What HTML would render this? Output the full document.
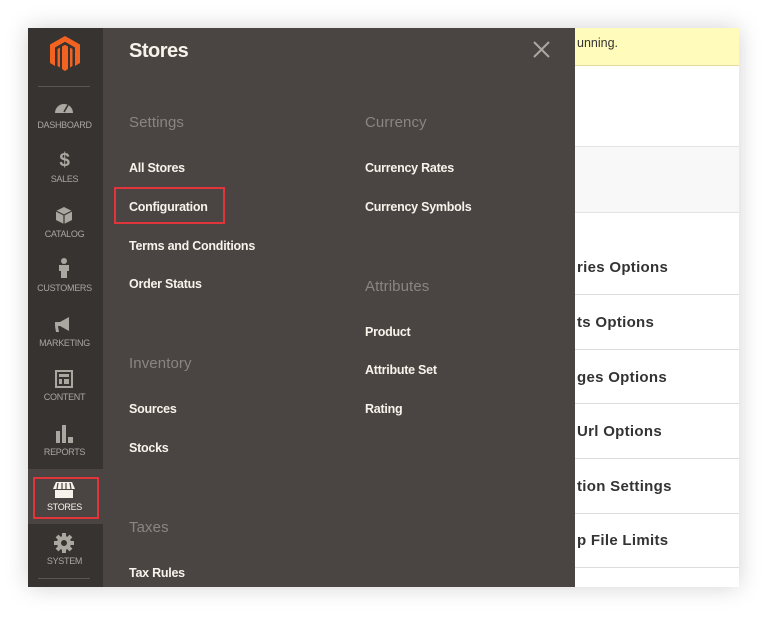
<!DOCTYPE html>
<html><head><style>
*{margin:0;padding:0;box-sizing:border-box}
body{width:768px;height:617px;background:#fff;position:relative;overflow:hidden;font-family:"Liberation Sans",sans-serif}
.a{position:absolute}
.frame{left:28px;top:28px;width:711px;height:559px;box-shadow:0 0 22px rgba(0,0,0,.18);background:#fff}
.side{left:28px;top:28px;width:75px;height:559px;background:#373330}
.fly{left:103px;top:28px;width:472px;height:559px;background:#4a4542}
.it{position:absolute;left:27px;width:75px;text-align:center;color:#aaa6a0;font-size:9px;letter-spacing:-.3px}
.lk{position:absolute;color:#f7f3eb;font-size:12.5px;font-weight:bold;letter-spacing:-.25px;margin-top:1px}
.hd{position:absolute;color:#8a8580;font-size:15px;letter-spacing:.1px}
.rt{position:absolute;left:577px;color:#333;font-size:15px;font-weight:bold;letter-spacing:.3px}
.ln{position:absolute;left:575px;width:164px;height:1px;background:#dcdcdc}
</style></head><body>
<div class="a frame"></div>
<div class="a" style="left:575px;top:28px;width:164px;height:38px;background:#fffbbb;border-bottom:1px solid #e0dca0"></div>
<div class="a" style="left:577px;top:36px;font-size:12.5px;color:#333">unning.</div>
<div class="a" style="left:575px;top:146px;width:164px;height:67px;background:#f8f8f8;border-top:1px solid #e3e3e3;border-bottom:1px solid #e3e3e3"></div>
<div class="rt" style="top:259px">ries Options</div>
<div class="ln" style="top:294px"></div>
<div class="rt" style="top:314px">ts Options</div>
<div class="ln" style="top:349px"></div>
<div class="rt" style="top:369px">ges Options</div>
<div class="ln" style="top:403px"></div>
<div class="rt" style="top:423px">Url Options</div>
<div class="ln" style="top:458px"></div>
<div class="rt" style="top:478px">tion Settings</div>
<div class="ln" style="top:513px"></div>
<div class="rt" style="top:532px">p File Limits</div>
<div class="ln" style="top:567px"></div>

<div class="a side"></div>
<svg class="a" style="left:50px;top:36px" width="30" height="36" viewBox="0 0 30 36"><path d="M15 0L30 8.5V27L25 30V11.5L15 5.8 5 11.5V30L0 27V8.5Z M12 10.5l3-1.7 3 1.7V33l-3 2-3-2Z" fill="#f26322"/><path d="M7.5 13l2.5-1.4V31.5L7.5 30Z M22.5 13L20 11.6V31.5l2.5-1.5Z" fill="#f26322"/></svg>
<div class="a" style="left:38px;top:86px;width:52px;height:1px;background:#5a5550"></div>
<svg class="a" style="left:54px;top:100px" width="20" height="14" viewBox="0 0 20 14"><path d="M1 13A9 9 0 0 1 19 13Z" fill="#aaa6a0"/><path d="M10 12L14 5" stroke="#373330" stroke-width="1.6"/></svg>
<div class="it" style="top:120px">DASHBOARD</div>
<div class="it" style="top:150px;font-size:19px;font-weight:bold;color:#aaa6a0">$</div>
<div class="it" style="top:174px">SALES</div>
<svg class="a" style="left:56px;top:207px" width="16" height="17" viewBox="0 0 16 17"><path d="M8 0L16 4V13L8 17 0 13V4Z" fill="#aaa6a0"/><path d="M0 4L8 8 16 4M8 8V17" stroke="#373330" stroke-width="1.2" fill="none"/></svg>
<div class="it" style="top:229px">CATALOG</div>
<svg class="a" style="left:58px;top:258px" width="12" height="20" viewBox="0 0 12 20"><circle cx="6" cy="3" r="3" fill="#aaa6a0"/><path d="M1 7h10v6H9v7H3v-7H1Z" fill="#aaa6a0"/></svg>
<div class="it" style="top:283px">CUSTOMERS</div>
<svg class="a" style="left:53px;top:317px" width="20" height="16" viewBox="0 0 20 16"><path d="M2 5h5L16 0V14L7 9H5L6 15H3L2 9Z" fill="#aaa6a0"/></svg>
<div class="it" style="top:338px">MARKETING</div>
<svg class="a" style="left:55px;top:370px" width="18" height="18" viewBox="0 0 18 18"><rect x="1" y="1" width="16" height="16" fill="none" stroke="#aaa6a0" stroke-width="2"/><rect x="4" y="4" width="10" height="3" fill="#aaa6a0"/><rect x="4" y="9" width="3" height="5" fill="#aaa6a0"/><rect x="9" y="9" width="5" height="5" fill="#aaa6a0"/></svg>
<div class="it" style="top:392px">CONTENT</div>
<svg class="a" style="left:55px;top:425px" width="20" height="18" viewBox="0 0 20 18"><rect x="1" y="6" width="4" height="12" fill="#aaa6a0"/><rect x="7" y="0" width="4" height="18" fill="#aaa6a0"/><rect x="13" y="12" width="5" height="6" fill="#aaa6a0"/></svg>
<div class="it" style="top:447px">REPORTS</div>
<div class="a" style="left:28px;top:469px;width:75px;height:55px;background:#4a4542"></div>
<div class="a" style="left:33px;top:477px;width:66px;height:42px;border:2px solid #e0353a"></div>
<svg class="a" style="left:53px;top:482px" width="22" height="16" viewBox="0 0 22 16"><path d="M3 0h16l3 7H0Z" fill="#f7f3eb"/><path d="M5 1L4 7M9 1V7M13 1V7M17 1l1 6" stroke="#4a4542" stroke-width="1.2"/><rect x="2" y="8" width="18" height="8" fill="#f7f3eb"/></svg>
<div class="it" style="top:502px;color:#f7f3eb">STORES</div>
<svg class="a" style="left:54px;top:533px" width="20" height="20" viewBox="0 0 20 20"><circle cx="10" cy="10" r="7" fill="#aaa6a0"/><path d="M10 0V20M0 10H20M3 3L17 17M17 3L3 17" stroke="#aaa6a0" stroke-width="4"/><circle cx="10" cy="10" r="3" fill="#373330"/></svg>
<div class="it" style="top:556px">SYSTEM</div>
<div class="a" style="left:38px;top:578px;width:52px;height:1px;background:#5a5550"></div>

<div class="a fly"></div>
<div class="a" style="left:129px;top:40px;color:#f7f3eb;font-size:20px;font-weight:bold;letter-spacing:-.5px">Stores</div>
<svg class="a" style="left:533px;top:41px" width="17" height="17" viewBox="0 0 17 17"><path d="M1 1L16 16M16 1L1 16" stroke="#aaa6a0" stroke-width="2"/></svg>
<div class="hd" style="left:129px;top:114px">Settings</div>
<div class="lk" style="left:129px;top:160px">All Stores</div>
<div class="a" style="left:114px;top:187px;width:111px;height:37px;border:2px solid #e0353a"></div>
<div class="lk" style="left:129px;top:199px">Configuration</div>
<div class="lk" style="left:129px;top:238px">Terms and Conditions</div>
<div class="lk" style="left:129px;top:276px">Order Status</div>
<div class="hd" style="left:129px;top:355px">Inventory</div>
<div class="lk" style="left:129px;top:401px">Sources</div>
<div class="lk" style="left:129px;top:440px">Stocks</div>
<div class="hd" style="left:129px;top:519px">Taxes</div>
<div class="lk" style="left:129px;top:565px">Tax Rules</div>
<div class="hd" style="left:365px;top:114px">Currency</div>
<div class="lk" style="left:365px;top:160px">Currency Rates</div>
<div class="lk" style="left:365px;top:199px">Currency Symbols</div>
<div class="hd" style="left:365px;top:278px">Attributes</div>
<div class="lk" style="left:365px;top:324px">Product</div>
<div class="lk" style="left:365px;top:362px">Attribute Set</div>
<div class="lk" style="left:365px;top:401px">Rating</div>
</body></html>
